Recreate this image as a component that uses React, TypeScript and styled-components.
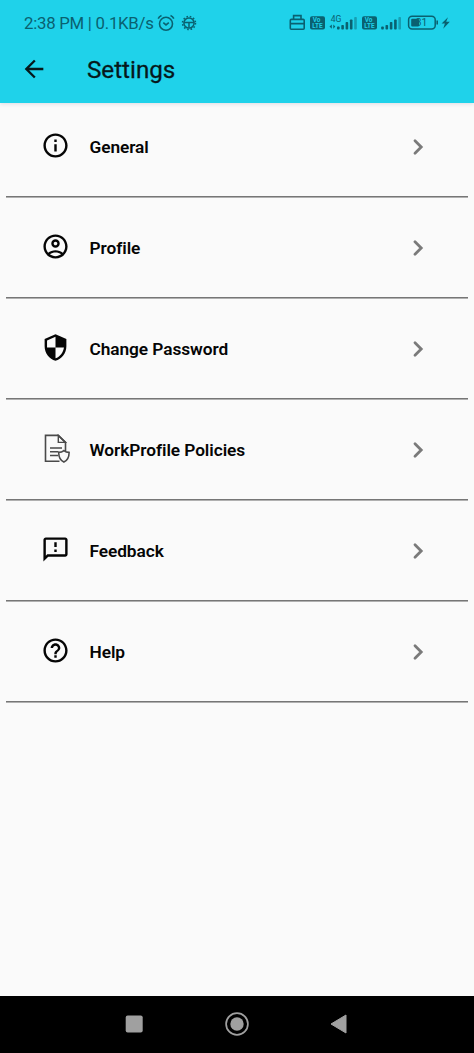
import React from "react";
import styled, { createGlobalStyle } from "styled-components";

const GlobalStyle = createGlobalStyle`
  *, *::before, *::after { box-sizing: border-box; }
  body { margin: 0; background: #fafafa; font-family: Roboto, "Noto Sans", sans-serif; }
  svg { display: block; flex: none; }
`;

const Screen = styled.div`
  display: flex;
  flex-direction: column;
  width: 474px;
  height: 1053px;
  background: #fafafa;
  overflow: hidden;
`;

const Header = styled.header`
  flex: none;
  height: 102.5px;
  background: #1fd2ea;
  box-shadow: 0 1px 4px rgba(40, 40, 90, 0.14);
`;

const StatusBar = styled.div`
  display: flex;
  align-items: center;
  justify-content: space-between;
  height: 46px;
  padding: 0 23px 0 24px;
  color: #0a6170;
`;

const StatusLeft = styled.div`
  display: flex;
  align-items: center;
`;

const StatusText = styled.span`
  width: 132.5px;
  font-size: 16.8px;
  line-height: 20px;
  letter-spacing: -0.26px;
  white-space: nowrap;
`;

const AppBar = styled.div`
  display: flex;
  align-items: center;
  height: 48px;
  padding-left: 20px;
  color: #06181b;
`;

const BackButton = styled.span`
  padding-bottom: 2px;
`;

const Title = styled.h1`
  margin: 0 0 0 39px;
  font-size: 24.2px;
  line-height: 30px;
  font-weight: 400;
  -webkit-text-stroke: 0.3px currentColor;
`;

const List = styled.ul`
  flex: 1;
  margin: 0;
  padding: 0 6px;
  list-style: none;
`;

const Row = styled.li`
  display: flex;
  align-items: center;
  height: 101px;
  padding: 0 36.5px 0 35px;
  border-bottom: 1px solid #767676;
  box-shadow: 0 1px 0 #b0b0b0;
  color: #050505;

  &:first-child {
    height: 94.5px;
    padding-bottom: 6.5px;
  }
`;

const RowIcon = styled.span`
  padding-bottom: 1px;
`;

const RowChevron = styled.span`
  padding-top: 1px;
`;

const RowLabel = styled.span`
  flex: 1;
  margin-left: 19.5px;
  padding-top: 2px;
  font-size: 17.3px;
  line-height: 22px;
  letter-spacing: -0.07px;
  font-weight: 600;
`;

const NavBar = styled.nav`
  display: flex;
  flex: none;
  align-items: center;
  justify-content: space-between;
  height: 57px;
  padding: 0 126px 1px 125px;
  background: #000;
`;

const materialPaths = {
  info: "M11 7h2v2h-2zm0 4h2v6h-2zm1-9C6.48 2 2 6.48 2 12s4.48 10 10 10 10-4.48 10-10S17.52 2 12 2zm0 18c-4.41 0-8-3.59-8-8s3.59-8 8-8 8 3.59 8 8-3.59 8-8 8z",
  profile:
    "M12 2C6.48 2 2 6.48 2 12s4.48 10 10 10 10-4.48 10-10S17.52 2 12 2zM7.35 18.5C8.66 17.56 10.26 17 12 17s3.34.56 4.65 1.5C15.34 19.44 13.74 20 12 20s-3.34-.56-4.65-1.5zm10.79-1.38C16.45 15.8 14.32 15 12 15s-4.45.8-6.14 2.12C4.7 15.73 4 13.95 4 12c0-4.42 3.58-8 8-8s8 3.58 8 8c0 1.95-.7 3.73-1.86 5.12zM12 6c-1.93 0-3.5 1.57-3.5 3.5S10.07 13 12 13s3.5-1.57 3.5-3.5S13.93 6 12 6zm0 5c-.83 0-1.5-.67-1.5-1.5S11.17 8 12 8s1.5.67 1.5 1.5S12.83 11 12 11z",
  shield:
    "M12 1L3 5v6c0 5.55 3.84 10.74 9 12 5.16-1.26 9-6.45 9-12V5l-9-4zm0 10.99h7c-.53 4.12-3.28 7.79-7 8.94V12H5V6.3l7-3.11v8.8z",
  feedback:
    "M20 2H4c-1.1 0-1.99.9-1.99 2L2 22l4-4h14c1.1 0 2-.9 2-2V4c0-1.1-.9-2-2-2zm0 14H5.17l-.59.59-.58.58V4h16v12zm-9-4h2v2h-2zm0-6h2v4h-2z",
  help: "M11 18h2v-2h-2v2zm1-16C6.48 2 2 6.48 2 12s4.48 10 10 10 10-4.48 10-10S17.52 2 12 2zm0 18c-4.41 0-8-3.59-8-8s3.59-8 8-8 8 3.59 8 8-3.59 8-8 8zm0-14c-2.21 0-4 1.79-4 4h2c0-1.1.9-2 2-2s2 .9 2 2c0 2-3 1.75-3 5h2c0-2.25 3-2.5 3-5 0-2.21-1.79-4-4-4z",
  back: "M20 11H7.83l5.59-5.59L12 4l-8 8 8 8 1.41-1.41L7.83 13H20v-2z",
};

type MaterialName = keyof typeof materialPaths;

const Material = ({ name, size = 29 }: { name: MaterialName; size?: number }) => (
  <svg width={size} height={size} viewBox="0 0 24 24" fill="currentColor">
    <path d={materialPaths[name]} />
  </svg>
);

const ChevronIcon = () => (
  <svg width="28" height="28" viewBox="0 0 28 28" fill="none" stroke="#7a7a7a" strokeWidth="2.8">
    <path d="M11 7.8l6.2 6.2-6.2 6.2" strokeLinecap="round" />
  </svg>
);

const PolicyIcon = () => (
  <svg width="29" height="29" viewBox="0 0 29 29" fill="none" stroke="#4a4a4a" strokeWidth="1.6">
    <path d="M18.5 27.2H4.5V1.4h12.8l7.2 7v8.6" />
    <path d="M17.3 1.4v7h7.2z" strokeWidth="1.4" />
    <path d="M9 14h12M9 17.8h8.5M9 21.6h8" strokeWidth="1.5" />
    <path d="M22.9 16.6c1.6 1.2 3.2 1.7 5.2 1.8 0 4.4-1.1 7.6-5.2 9.6-4.1-2-5.2-5.2-5.2-9.6 2-.1 3.6-.6 5.2-1.8z" fill="#fafafa" />
  </svg>
);

const AlarmIcon = () => (
  <svg width="18" height="18" viewBox="0 0 18 18" fill="none" stroke="currentColor" strokeWidth="1.6">
    <circle cx="9" cy="9.8" r="6.5" />
    <path d="M1.2 4.6C1.8 3.2 3 2 4.5 1.4M16.8 4.6C16.2 3.2 15 2 13.5 1.4M6.3 8.6L9 10.9l2.8-2.3" />
  </svg>
);

const GearIcon = () => (
  <svg width="16" height="16" viewBox="0 0 16 16" fill="none" stroke="currentColor">
    <circle cx="8" cy="8" r="5.1" strokeWidth="1.5" />
    <circle cx="8" cy="8" r="6.5" strokeWidth="1.5" strokeDasharray="1.6 1.803" />
    <path d="M3 7.5h10M8 7.5v5" strokeWidth="1.5" />
  </svg>
);

const statusFont = "Roboto, sans-serif";

const VolteBadge = ({ x }: { x: number }) => (
  <g transform={`translate(${x} 0)`}>
    <rect y="7.3" width="15" height="13.2" rx="2" fill="currentColor" />
    <g fill="#1fd2ea" fontFamily={statusFont} fontWeight="700" fontSize="6.4" textAnchor="middle">
      <text x="6.5" y="13.2">Vo</text>
      <text x="7.5" y="19.4">LTE</text>
    </g>
  </g>
);

const Signal = ({ x }: { x: number }) => (
  <g fill="currentColor" transform={`translate(${x} 0)`}>
    {[3, 4.5, 7.5, 10, 12.5].map((h, i) => (
      <rect key={h} x={i * 4.3} y={20.5 - h} width="2.6" height={h} rx="0.8" opacity={i === 4 ? 0.45 : 1} />
    ))}
  </g>
);

const StatusIcons = () => (
  <svg width="163" height="28" viewBox="0 0 163 28">
    <g fill="none" stroke="currentColor" strokeWidth="1.6">
      <rect x="2.3" y="10.4" width="13.9" height="9.9" rx="1" />
      <path d="M5.6 10V6.6h7.4V10M2.3 14.6h13.9" />
    </g>
    <VolteBadge x={22} />
    <text x="42.7" y="13" fontSize="8.6" fontFamily={statusFont} fill="currentColor">4G</text>
    <path d="M41.5 17.6l2.3-2.2v4.4zM47.3 17.6l-2-2.2v4.4z" fill="currentColor" />
    <Signal x={49} />
    <VolteBadge x={74} />
    <Signal x={93.2} />
    <rect x="120.6" y="7.3" width="26.6" height="12.8" rx="3.5" fill="none" stroke="currentColor" strokeWidth="1.5" />
    <rect x="123.2" y="9.8" width="7.8" height="7.8" rx="1" fill="currentColor" />
    <path d="M149.2 11.6v4" stroke="currentColor" strokeWidth="1.6" />
    <text x="133.6" y="17.4" textAnchor="middle" fontSize="10.3" fontFamily={statusFont} fill="currentColor">31</text>
    <path d="M160 8.2l-6.4 6.4h3.3l-1.7 5.2 6.6-7.1h-3.6z" fill="currentColor" />
  </svg>
);

const StatusGear = styled.span`
  margin-left: 6px;
`;

const items: { label: string; icon: React.ReactNode }[] = [
  { label: "General", icon: <Material name="info" /> },
  { label: "Profile", icon: <Material name="profile" /> },
  { label: "Change Password", icon: <Material name="shield" /> },
  { label: "WorkProfile Policies", icon: <PolicyIcon /> },
  { label: "Feedback", icon: <Material name="feedback" /> },
  { label: "Help", icon: <Material name="help" /> },
];

export default function App() {
  return (
    <Screen>
      <GlobalStyle />
      <Header>
        <StatusBar>
          <StatusLeft>
            <StatusText>2:38 PM | 0.1KB/s</StatusText>
            <AlarmIcon />
            <StatusGear><GearIcon /></StatusGear>
          </StatusLeft>
          <StatusIcons />
        </StatusBar>
        <AppBar>
          <BackButton><Material name="back" size={28} /></BackButton>
          <Title>Settings</Title>
        </AppBar>
      </Header>
      <List>
        {items.map(({ label, icon }) => (
          <Row key={label}>
            <RowIcon>{icon}</RowIcon>
            <RowLabel>{label}</RowLabel>
            <RowChevron><ChevronIcon /></RowChevron>
          </Row>
        ))}
      </List>
      <NavBar>
        <svg width="18" height="18" viewBox="0 0 18 18"><rect x="0.7" y="0.5" width="17" height="17" rx="2" fill="#a0a0a0" /></svg>
        <svg width="24" height="24" viewBox="0 0 24 24">
          <circle cx="12" cy="12" r="10.9" fill="none" stroke="#a0a0a0" strokeWidth="1.7" />
          <circle cx="12" cy="12" r="6.7" fill="#a0a0a0" />
        </svg>
        <svg width="18" height="20" viewBox="0 0 18 20"><path d="M1 10L16 1v18z" fill="#a0a0a0" stroke="#a0a0a0" strokeWidth="1" strokeLinejoin="round" /></svg>
      </NavBar>
    </Screen>
  );
}
